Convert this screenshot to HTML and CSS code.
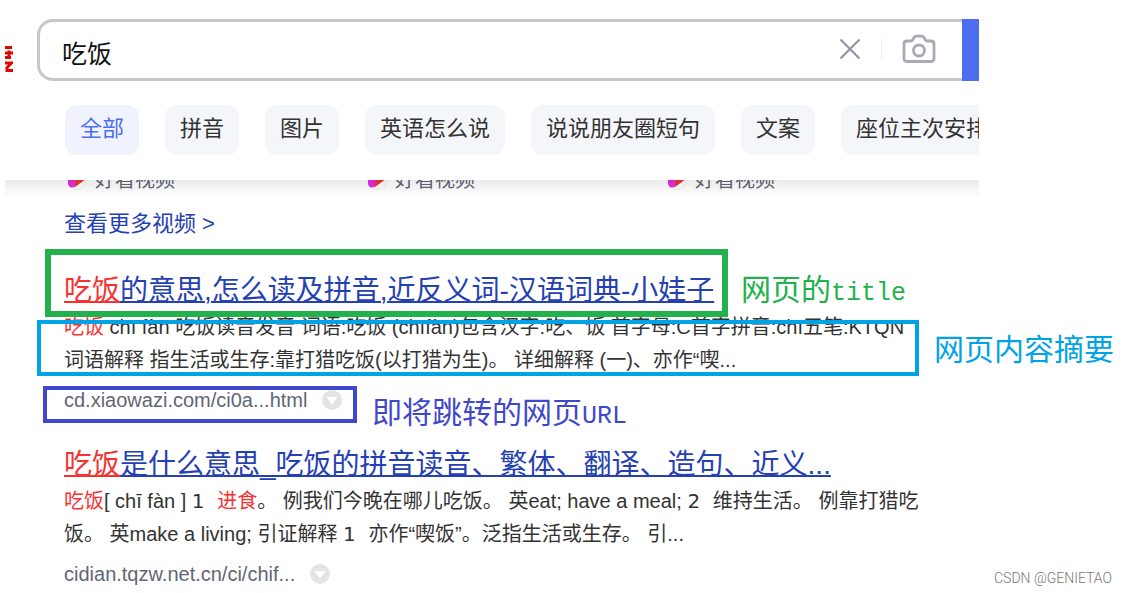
FILE: index.html
```html
<!DOCTYPE html>
<html lang="zh-CN">
<head>
    <meta charset="UTF-8">
    <meta name="viewport" content="width=device-width, initial-scale=1.0">
    <title>吃饭</title>
    <link rel="stylesheet" href="styles.css">
</head>
<body>
    <div class="page">
        <header class="header">
            <form class="search">
                <svg class="logo" width="8" height="28" viewBox="0 0 8 28" aria-hidden="true">
                    <path d="M0 2.500H7M0 8H8M4 5.500V11M0 12.500H6M0 18H6.500L2 22.500V25.500H8" fill="none" stroke="#e10602" stroke-width="3"/>
                </svg>
                <div class="search-box">
                    <input class="search-input" type="text" value="吃饭" aria-label="搜索">
                    <button class="icon-button" type="button" aria-label="清除">
                        <svg width="22" height="22" viewBox="0 0 22 22"><path d="M1.500 1.500l19 19M20.500 1.500l-19 19" fill="none" stroke="#9195a3" stroke-width="2.200"/></svg>
                    </button>
                    <span class="divider"></span>
                    <button class="icon-button" type="button" aria-label="图片搜索">
                        <svg width="34" height="30" viewBox="0 0 34 30" fill="none" stroke="#a8aab7" stroke-width="2.800">
                            <path d="M5 7h3.500q1.500 0 2-.8l1.500-2.700q.7-1.300 2-1.300h6q1.300 0 2 1.300l1.500 2.700q.5.800 2 .8H29q3 0 3 3v14.500q0 3-3 3H5q-3 0-3-3V10q0-3 3-3z"/>
                            <circle cx="17" cy="16.500" r="5.500"/>
                        </svg>
                    </button>
                </div>
                <button class="search-submit" type="submit" aria-label="百度一下"></button>
            </form>
            <nav class="tags">
                <a class="tag active" href="#">全部</a>
                <a class="tag" href="#">拼音</a>
                <a class="tag" href="#">图片</a>
                <a class="tag" href="#">英语怎么说</a>
                <a class="tag" href="#">说说朋友圈短句</a>
                <a class="tag" href="#">文案</a>
                <a class="tag" href="#">座位主次安排</a>
            </nav>
        </header>

        <main class="content">
            <div class="videos">
                <div class="source">
                    <svg width="20" height="20" viewBox="0 0 20 20"><circle cx="10" cy="10" r="9.500" fill="#fff" stroke="#eee"/><path d="M1 4v10q2 6 8 2V4z" fill="#e62be6"/><path d="M8 4l11 5-11 8z" fill="#f0352e"/></svg>
                    好看视频
                </div>
                <div class="source">
                    <svg width="20" height="20" viewBox="0 0 20 20"><circle cx="10" cy="10" r="9.500" fill="#fff" stroke="#eee"/><path d="M1 4v10q2 6 8 2V4z" fill="#e62be6"/><path d="M8 4l11 5-11 8z" fill="#f0352e"/></svg>
                    好看视频
                </div>
                <div class="source">
                    <svg width="20" height="20" viewBox="0 0 20 20"><circle cx="10" cy="10" r="9.500" fill="#fff" stroke="#eee"/><path d="M1 4v10q2 6 8 2V4z" fill="#e62be6"/><path d="M8 4l11 5-11 8z" fill="#f0352e"/></svg>
                    好看视频
                </div>
            </div>
            <a class="more" href="#">查看更多视频 &gt;</a>

            <article class="result">
                <h3 class="title"><a href="#"><em>吃饭</em>的意思,怎么读及拼音,近反义词-汉语词典-小娃子</a></h3>
                <p class="summary"><em>吃饭</em> chī fàn 吃饭读音发音 词语:吃饭 (chīfàn)包含汉字:吃、饭 首字母:C首字拼音:chī五笔:KTQN<br>词语解释 指生活或生存:靠打猎吃饭(以打猎为生)。 详细解释 (一)、亦作“喫...</p>
                <div class="site">
                    <a href="#">cd.xiaowazi.com/ci0a...html</a>
                    <svg width="20" height="20" viewBox="0 0 20 20"><circle cx="10" cy="10" r="10" fill="#e4e4e4"/><path d="M4.500 7h11L10 14.500z" fill="#fff"/></svg>
                </div>

                <!-- marks over the first result -->
                <div class="mark mark-title"></div>
                <div class="mark mark-summary"></div>
                <div class="mark mark-url"></div>
                <div class="note note-title">网页的<span class="latin">title</span></div>
                <div class="note note-summary">网页内容摘要</div>
                <div class="note note-url">即将跳转的网页<span class="latin">URL</span></div>
            </article>

            <article class="result">
                <h3 class="title"><a href="#"><em>吃饭</em>是什么意思_吃饭的拼音读音、繁体、翻译、造句、近义...</a></h3>
                <p class="summary"><em>吃饭</em>[ chī fàn ] <span class="num">1&nbsp; </span><em>进食</em>。 例我们今晚在哪儿吃饭。 英eat; have a meal; <span class="num">2&nbsp; </span>维持生活。 例靠打猎吃<br>饭。 英make a living; 引证解释 <span class="num">1&nbsp; </span>亦作“喫饭”。泛指生活或生存。 引...</p>
                <div class="site">
                    <a href="#">cidian.tqzw.net.cn/ci/chif...</a>
                    <svg width="20" height="20" viewBox="0 0 20 20"><circle cx="10" cy="10" r="10" fill="#e4e4e4"/><path d="M4.500 7h11L10 14.500z" fill="#fff"/></svg>
                </div>
            </article>
        </main>
    </div>
    <div class="watermark">CSDN @GENIETAO</div>
</body>
</html>
```
FILE: styles.css
```css
* { box-sizing: border-box; }
body {
    margin: 0;
    background: #fff;
    color: #333;
    font-family: "Liberation Sans", "Noto Sans CJK SC", sans-serif;
}
a { text-decoration: none; }
em {
    color: #f73131;
    font-style: normal;
}
.page { margin: 0 148px 0 5px; }

.header {
    position: relative;
    z-index: 1;
    height: 180px;
    padding-top: 19px;
    background: #fff;
}
.header::after {
    content: "";
    position: absolute;
    top: 100%;
    left: 0;
    right: 0;
    height: 18px;
    background: linear-gradient(rgba(0,0,0,0.08), rgba(0,0,0,0));
}
.search {
    display: flex;
    align-items: center;
}
.logo { margin: 18px 24px 0 0; }
.search-box {
    display: flex;
    flex: 1;
    align-items: center;
    height: 62px;
    padding: 0 26px 2px 22px;
    border: 3px solid #c4c7ce;
    border-right: none;
    border-radius: 16px 0 0 16px;
}
.search-input {
    flex: 1;
    min-width: 0;
    padding: 6px 0 0;
    border: none;
    outline: none;
    background: none;
    color: #111;
    font: inherit;
    font-size: 25px;
}
.icon-button {
    display: flex;
    padding: 0;
    border: none;
    background: none;
    cursor: pointer;
}
.divider {
    width: 1px;
    height: 22px;
    margin: 0 20px;
    background: #eee;
}
.search-submit {
    width: 17px;
    height: 62px;
    padding: 0;
    border: none;
    background: #4e6ef2;
}
.tags {
    display: flex;
    gap: 26px;
    margin-top: 24px;
    padding-left: 60px;
    overflow: hidden;
}
.tag {
    flex: none;
    height: 50px;
    padding: 0 15px;
    border-radius: 12px;
    background: #f5f6fa;
    color: #333;
    font-size: 22px;
    line-height: 48px;
}
.tag.active {
    background: #f0f3fe;
    color: #4e6ef2;
}

.content { padding-left: 59px; }
.videos {
    display: flex;
    margin-top: -14px;
}
.source {
    display: flex;
    flex: 0 0 300px;
    align-items: center;
    gap: 8px;
    padding-left: 3px;
    color: #626675;
    font-size: 20px;
    line-height: 28px;
}
.more {
    display: block;
    margin: 14px 0 31px;
    color: #2440b3;
    font-size: 22px;
    line-height: 32px;
}

.result {
    position: relative;
    margin-bottom: 29px;
}
.title {
    margin: 0;
    font-size: 28px;
    font-weight: 400;
    line-height: 40px;
    white-space: nowrap;
}
.title a {
    color: #2440b3;
    text-decoration: underline;
    text-decoration-thickness: 2px;
}
.title em { text-decoration: underline 2px; }
.summary {
    margin: 0 0 7px;
    font-size: 20px;
    line-height: 33px;
    white-space: nowrap;
}
.num {
    font-family: "DejaVu Sans", sans-serif;
    line-height: 1;
}
.site {
    display: flex;
    align-items: center;
    gap: 15px;
    font-size: 20px;
    line-height: 32px;
}
.site a { color: #626675; }

.mark { position: absolute; }
.mark-title {
    top: -22px;
    left: -19px;
    width: 683px;
    height: 68px;
    border: 6px solid #22b14c;
}
.mark-summary {
    top: 49px;
    left: -27px;
    width: 882px;
    height: 56px;
    border: 4px solid #00a2e8;
}
.mark-url {
    top: 115px;
    left: -21px;
    width: 314px;
    height: 37px;
    border: 4px solid #3f48cc;
}
.note {
    position: absolute;
    font-size: 30px;
    line-height: 40px;
    white-space: nowrap;
}
.note .latin {
    font-family: "Liberation Mono", monospace;
    font-size: 25px;
    line-height: 1;
}
.note-title {
    top: -1px;
    left: 677px;
    color: #22b14c;
}
.note-summary {
    top: 59px;
    left: 870px;
    color: #00a2e8;
}
.note-url {
    top: 122px;
    left: 308px;
    color: #3f48cc;
}

.watermark {
    position: absolute;
    right: 15px;
    bottom: 5px;
    color: #777;
    font-family: Roboto, sans-serif;
    font-size: 14px;
    font-weight: 300;
    line-height: 20px;
}
```
